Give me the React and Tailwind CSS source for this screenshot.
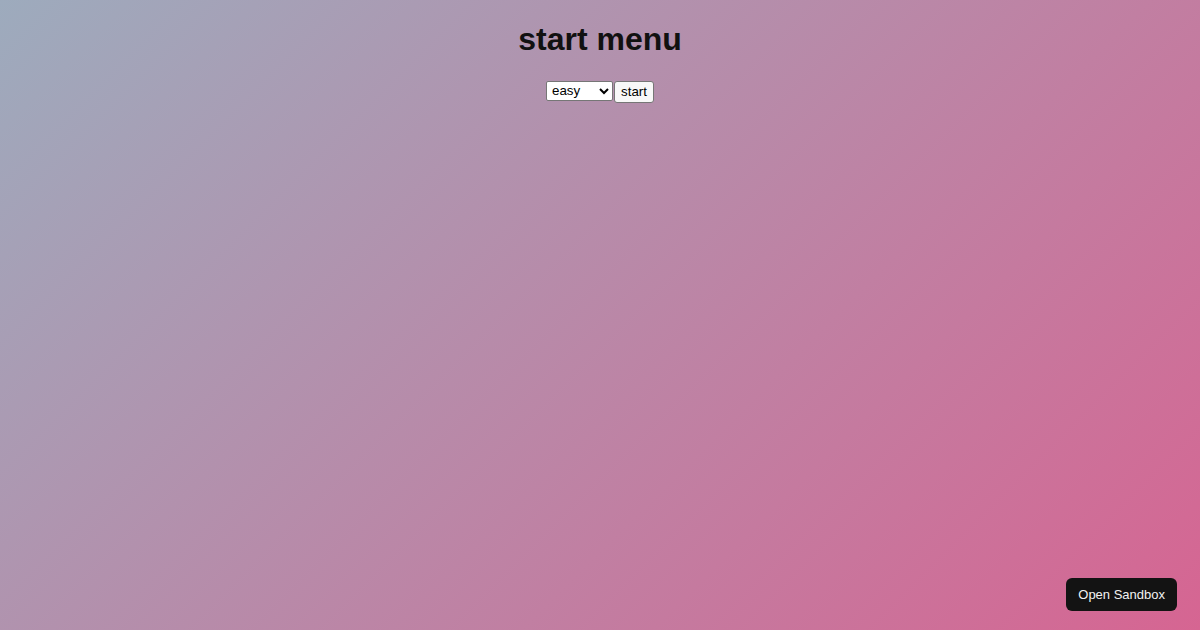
export default function App() {
  return (
    <div className="min-h-screen w-full bg-[linear-gradient(135deg,#9dabbd,#d66592)] text-center font-['Liberation_Sans',Arial,sans-serif] text-[#111]">
      <h1 className="m-0 pt-[21.44px] pb-[21.44px] text-[32px] font-bold leading-[normal]">start menu</h1>
      <div className="flex justify-center items-start pt-[1px]">
        <select
          defaultValue="easy"
          className="w-[67px] h-[20px] text-[13.33px] text-black bg-white border border-[#767676] rounded-[2px] pl-[1px]"
        >
          <option value="easy">easy</option>
          <option value="medium">medium</option>
          <option value="hard">hard</option>
        </select>
        <button className="h-[22px] w-[40px] ml-[1px] text-[13.33px] text-black bg-[#f8f8f8] border border-[#767676] rounded-[3px]">
          start
        </button>
      </div>

      <button className="fixed right-[23px] bottom-[19px] h-[33px] px-[12px] rounded-[6px] bg-[#131313] text-[#f2f2f2] text-[13px] font-['Liberation_Sans',Arial,sans-serif]">
        Open Sandbox
      </button>
    </div>
  )
}
